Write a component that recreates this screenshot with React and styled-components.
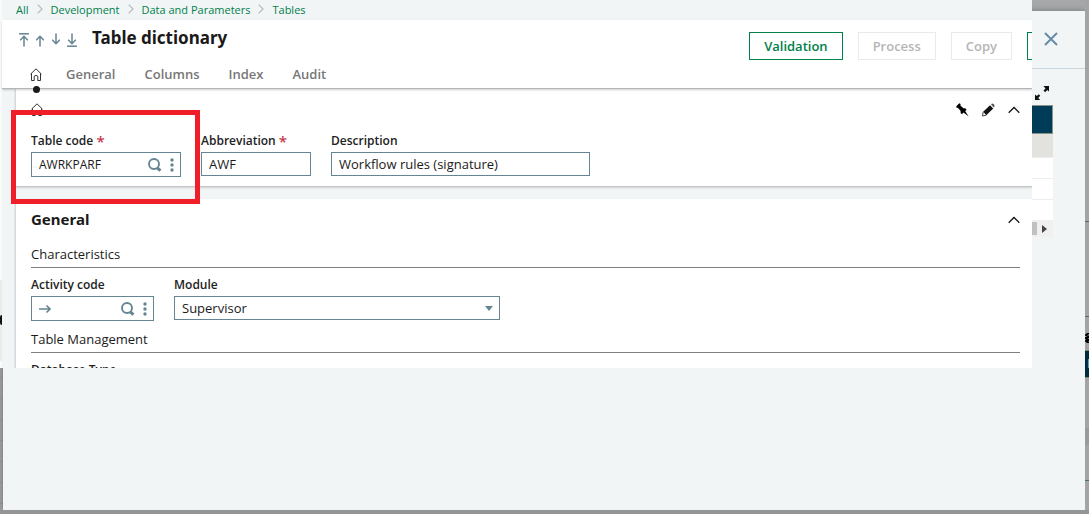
import { useState } from "react";
import styled, { createGlobalStyle } from "styled-components";

const App = () => {
  const [tableCode, setTableCode] = useState("AWRKPARF");
  const [abbreviation, setAbbreviation] = useState("AWF");
  const [description, setDescription] = useState("Workflow rules (signature)");
  const [activity, setActivity] = useState("");

  return (
    <>
      <GlobalStyle />
      <Page>
        <LeftRail />
        <Dialog>
          <DialogHeader>
            <IconButton aria-label="Close">
              <CloseIcon />
            </IconButton>
          </DialogHeader>
          <DialogBody>
            <IconButton aria-label="Expand">
              <ExpandIcon />
            </IconButton>
            <Grid>
              <GridHead />
              <GridFilter />
              <GridRow />
              <GridRow />
              <GridRow />
              <GridScroll>
                <ScrollThumb />
                <svg width="16" height="16" viewBox="0 0 16 16">
                  <path d="M5 4v8l5-4z" fill="#444" />
                </svg>
              </GridScroll>
            </Grid>
          </DialogBody>
        </Dialog>
        <RightRail>
          <RailLine $space={221} />
          <RailLine $space={94} />
          <RailMark>
            <svg width="4" height="10" viewBox="0 0 4 10">
              <path
                d="M4 0L1 2l3 2M4 4L0 5l4 2M4 7L1 8l3 2"
                fill="none"
                stroke="#000"
                strokeWidth="2"
              />
            </svg>
          </RailMark>
          <RailHead>F</RailHead>
          <RailBand />
          <RailLine $space={35} />
        </RightRail>
        <BottomRail />

        {/* table dictionary window, sits over the dialog */}
        <Window>
          <Edge>
            <EdgeTab>
              <EdgeDot />
            </EdgeTab>
          </Edge>
          <Main>
            <Breadcrumb aria-label="Breadcrumb">
              <a href="#all">All</a>
              <Crumb />
              <a href="#development">Development</a>
              <Crumb />
              <a href="#data">Data and Parameters</a>
              <Crumb />
              <a href="#tables">Tables</a>
            </Breadcrumb>

            <Header>
              <TitleRow>
                <Arrows>
                  <IconButton aria-label="First record">
                    <ArrowIcon bar />
                  </IconButton>
                  <IconButton aria-label="Previous record">
                    <ArrowIcon />
                  </IconButton>
                  <IconButton aria-label="Next record">
                    <ArrowIcon down />
                  </IconButton>
                  <IconButton aria-label="Last record">
                    <ArrowIcon down bar />
                  </IconButton>
                </Arrows>
                <Title>Table dictionary</Title>
                <Actions>
                  <ActionButton>Validation</ActionButton>
                  <ActionButton disabled>Process</ActionButton>
                  <ActionButton disabled>Copy</ActionButton>
                  <ActionButton aria-label="More actions" />
                </Actions>
              </TitleRow>
              <Tabs>
                <Tab href="#home" aria-label="Home" $active>
                  <HomeIcon />
                </Tab>
                <Tab href="#general">General</Tab>
                <Tab href="#columns">Columns</Tab>
                <Tab href="#index">Index</Tab>
                <Tab href="#audit">Audit</Tab>
              </Tabs>
            </Header>

            <Panel>
              <PanelHeader>
                <HomeIcon />
                <Tools>
                  <IconButton aria-label="Pin">
                    <PinIcon />
                  </IconButton>
                  <IconButton aria-label="Edit">
                    <PencilIcon />
                  </IconButton>
                  <IconButton aria-label="Collapse">
                    <ChevronUp />
                  </IconButton>
                </Tools>
              </PanelHeader>
              <Fields>
                <Field $width={150}>
                  <label htmlFor="code">
                    Table code <Star>*</Star>
                  </label>
                  <Control $tall>
                    <input
                      id="code"
                      value={tableCode}
                      onChange={(e) => setTableCode(e.target.value)}
                    />
                    <LookupButtons />
                  </Control>
                </Field>
                <Field $width={110}>
                  <label htmlFor="abbr">
                    Abbreviation <Star>*</Star>
                  </label>
                  <Control>
                    <input
                      id="abbr"
                      value={abbreviation}
                      onChange={(e) => setAbbreviation(e.target.value)}
                    />
                  </Control>
                </Field>
                <Field $width={259}>
                  <label htmlFor="desc">Description</label>
                  <Control>
                    <input
                      id="desc"
                      value={description}
                      onChange={(e) => setDescription(e.target.value)}
                    />
                  </Control>
                </Field>
              </Fields>
            </Panel>

            <Panel>
              <PanelHeader>
                <PanelTitle>General</PanelTitle>
                <Tools>
                  <IconButton aria-label="Collapse General">
                    <ChevronUp />
                  </IconButton>
                </Tools>
              </PanelHeader>
              <SectionTitle>Characteristics</SectionTitle>
              <Fields>
                <Field $width={123}>
                  <label htmlFor="activity">Activity code</label>
                  <Control $tall>
                    <GoIcon />
                    <input
                      id="activity"
                      value={activity}
                      onChange={(e) => setActivity(e.target.value)}
                    />
                    <LookupButtons />
                  </Control>
                </Field>
                <Field $width={326}>
                  <label htmlFor="module">Module</label>
                  <Control>
                    <select id="module" defaultValue="Supervisor">
                      <option>Supervisor</option>
                    </select>
                    <svg width="8" height="5" viewBox="0 0 8 5">
                      <path d="M0 0h8L4 5z" fill="#668592" />
                    </svg>
                  </Control>
                </Field>
              </Fields>
              <SectionTitle>Table Management</SectionTitle>
              <Fields>
                <Field $width={150}>
                  <label htmlFor="dbtype">Database Type</label>
                  <Control>
                    <input id="dbtype" />
                  </Control>
                </Field>
              </Fields>
            </Panel>
          </Main>
          <Highlight />
        </Window>
      </Page>
    </>
  );
};

export default App;

// icons

const CloseIcon = () => (
  <svg width="14" height="14" viewBox="0 0 14 14">
    <path d="M1 1l12 12M13 1L1 13" stroke="#668aa3" strokeWidth="1.9" />
  </svg>
);

const ExpandIcon = () => (
  <svg width="14" height="14" viewBox="0 0 14 14" fill="#111">
    <path d="M8.500 0H14v5.500l-1.800-1.500-2 2.200-1.700-1.600 2-2.200zM0 14V8.500L1.800 10l2-1.800 1.400 1.600-2 2.200 2 2z" />
  </svg>
);

const ArrowIcon = ({ down, bar }) => (
  <svg width="10" height="14" viewBox="0 0 10 14">
    <g
      transform={down ? "rotate(180 5 7)" : undefined}
      fill="none"
      stroke="#668592"
      strokeWidth="1.5"
    >
      {bar && <path d="M0 .8h10" />}
      <path d="M5 13.500V3.500M1.200 7.200L5 3.300l3.800 3.900" />
    </g>
  </svg>
);

const HomeIcon = () => (
  <svg width="12" height="13" viewBox="0 0 12 13">
    <path
      d="M.5 6.200L6 .8l5.500 5.400M1.500 5.500v7h2.700V8.800q0-1.300 1.800-1.300t1.800 1.300v3.700h2.700v-7"
      fill="none"
      stroke="#333"
      strokeWidth="1"
    />
  </svg>
);

const PinIcon = () => (
  <svg width="13" height="14" viewBox="0 0 13 14">
    <path
      d="M.3 3.200L3.300.3l1.300.8-.2 1.400 3 2.700 2.300.3.8 1.200-1.300 1.500L12.700 13.600 7.600 9.600 6 11l-1.200-.6-.3-2.600-2.700-3-1.100.1z"
      fill="#000"
    />
  </svg>
);

const PencilIcon = () => (
  <svg width="13" height="14" viewBox="0 0 13 14">
    <path d="M1.200 8.700L8 2.200l3.200 3.200-6.900 6.800z" fill="#111" />
    <path d="M9 1.300L10.200.5q2.300.3 2.400 2.500l-.8 1.500z" fill="#555" />
    <path d="M1.200 8.700l-.7 4.300 3.800-.8" fill="none" stroke="#444" strokeWidth="1" />
    <path d="M8.300 1.800l3 3" stroke="#ccc" strokeWidth=".8" />
  </svg>
);

const ChevronUp = () => (
  <svg width="12" height="8" viewBox="0 0 12 8">
    <path d="M.7 6.700L6 1.500l5.300 5.200" fill="none" stroke="#111" strokeWidth="1.300" />
  </svg>
);

const Crumb = () => (
  <svg width="6" height="10" viewBox="0 0 6 10">
    <path d="M.7.6L5 5 .7 9.400" fill="none" stroke="#bbb" strokeWidth="1.300" />
  </svg>
);

const GoIcon = () => (
  <svg width="12" height="10" viewBox="0 0 12 10">
    <path d="M0 5h11M7.500 1.500L11 5 7.500 8.500" fill="none" stroke="#668592" strokeWidth="1.600" />
  </svg>
);

const LookupButtons = () => (
  <>
    <IconButton aria-label="Search">
      <svg width="14" height="14" viewBox="0 0 14 14" fill="none" stroke="#668592">
        <circle cx="6" cy="6" r="5" strokeWidth="1.900" />
        <path d="M9.300 10l3.200 2.600" strokeWidth="3" />
      </svg>
    </IconButton>
    <IconButton aria-label="More options">
      <svg width="4" height="14" viewBox="0 0 4 14" fill="#668592">
        <circle cx="2" cy="2" r="1.700" />
        <circle cx="2" cy="7" r="1.700" />
        <circle cx="2" cy="12" r="1.700" />
      </svg>
    </IconButton>
  </>
);

// styled components css

const GlobalStyle = createGlobalStyle`
  * {
    box-sizing: border-box;
  }

  body {
    margin: 0;
    background: #a6a7a8;
    color: #1a1a1a;
    font-family: "Open Sans", "Noto Sans", sans-serif;
    font-size: 13px;
  }

  svg {
    display: block;
    flex: none;
  }
`;

const Page = styled.div`
  position: relative;
  display: grid;
  grid-template-columns: 3px 1fr 4px;
  grid-template-rows: 1fr 4px;
  min-height: 100vh;
  overflow: hidden;
`;

const LeftRail = styled.div`
  background: repeating-linear-gradient(#a3a3a3 0 20px, #989898 20px 21px);
`;

const Dialog = styled.section`
  margin-top: 11px;
  background: #f1f5f6;
  box-shadow: 0 0 6px rgba(0, 0, 0, 0.3);
`;

const DialogHeader = styled.header`
  display: flex;
  align-items: center;
  justify-content: flex-end;
  height: 58px;
  padding: 0 27px 2px;
  border-bottom: 1px solid #c8d5dc;
`;

const DialogBody = styled.div`
  display: flex;
  flex-direction: column;
  align-items: flex-end;
  gap: 5px;
  padding: 17px 32px;

  > button {
    margin-right: 4px;
  }
`;

const Grid = styled.div`
  width: 100%;
`;

const GridHead = styled.div`
  height: 29px;
  background: #003b57;
  border: 1px solid #8c9188;
`;

const GridFilter = styled.div`
  height: 23px;
  background: #e2e3df;
`;

const GridRow = styled.div`
  height: 21px;
  background: #fff;
  border-top: 1px solid #ebedee;
`;

const GridScroll = styled.div`
  display: flex;
  align-items: center;
  justify-content: flex-end;
  height: 17px;
  background: #f0f0f0;
`;

const ScrollThumb = styled.div`
  flex: 1;
  height: 13px;
  background: #c1c1c1;
`;

const RightRail = styled.div`
  overflow: hidden;
  background: #a3a5a5;
`;

const RailLine = styled.div`
  height: 1px;
  margin-top: ${(props) => props.$space}px;
  background: #4c6b7c;
`;

const RailMark = styled.div`
  padding: 16px 0 7px;
`;

const RailHead = styled.div`
  height: 28px;
  padding-left: 2px;
  border: solid #7f8479;
  border-width: 1px 0;
  background: #002b3e;
  color: #9ba6ab;
  font-size: 12px;
  font-weight: 700;
  line-height: 26px;
`;

const RailBand = styled.div`
  height: 17px;
  margin-top: 50px;
  background: #999b9b;
`;

const BottomRail = styled.div`
  grid-column: 1 / -1;
  background: #949696;
`;

const Window = styled.section`
  position: absolute;
  inset: 0 57px 146px 0;
  display: flex;
  overflow: hidden;
  background: #f1f5f6;
`;

const Edge = styled.div`
  width: 2px;
  overflow: hidden;
  background: #fafafa;
`;

const EdgeTab = styled.div`
  height: 81px;
  margin-top: 280px;
  padding-top: 35px;
  background: #ebebe8;
`;

const EdgeDot = styled.div`
  height: 10px;
  border-radius: 5px 0 0 5px;
  background: #111;
`;

const Main = styled.main`
  display: flex;
  flex: 1;
  flex-direction: column;
  min-width: 0;
`;

const Breadcrumb = styled.nav`
  display: flex;
  flex: none;
  align-items: center;
  gap: 8px;
  height: 20px;
  padding: 0 14px 2px;
  font-size: 11px;

  a {
    color: #00804a;
    text-decoration: none;
  }
`;

const Header = styled.header`
  position: relative;
  flex: none;
  height: 69px;
  background: #fff;
  border-bottom: 1px solid #b3b5b6;
  box-shadow: 0 1px 2px rgba(0, 0, 0, 0.2);
`;

const TitleRow = styled.div`
  display: flex;
  align-items: center;
  height: 40px;
  padding-left: 17px;
`;

const Arrows = styled.div`
  display: flex;
  gap: 6px;
  margin-right: 15px;
`;

const Title = styled.h1`
  margin: 0;
  padding-bottom: 4px;
  font-family: "Noto Sans", sans-serif;
  font-size: 17px;
  font-weight: 700;
  line-height: 24px;
`;

const Actions = styled.div`
  display: flex;
  gap: 15px;
  margin: 12px -26px 0 auto;
`;

const ActionButton = styled.button`
  height: 28px;
  min-width: 31px;
  padding: 0 14px;
  border: 1px solid #00804a;
  background: #fff;
  color: #00804a;
  font-family: inherit;
  font-size: 13px;
  font-weight: 600;

  &:disabled {
    border-color: #e8ebed;
    color: #b5b5b5;
  }
`;

const Tabs = styled.nav`
  display: flex;
  gap: 29px;
  height: 28px;
  padding-left: 28px;
`;

const Tab = styled.a`
  position: relative;
  display: flex;
  align-items: center;
  margin-right: ${(props) => (props.$active ? -5 : 0)}px;
  color: #777;
  font-weight: 600;
  text-decoration: none;

  &::after {
    content: "";
    position: absolute;
    bottom: -5px;
    left: 3px;
    display: ${(props) => (props.$active ? "block" : "none")};
    width: 7px;
    height: 7px;
    border-radius: 50%;
    background: #1a1a1a;
  }
`;

const Panel = styled.section`
  flex: none;
  margin: 0 0 12px 13px;
  padding: 0 12px 3px 15px;
  background: #fff;
  border-left: 1px solid #d5d8da;
  border-bottom: 1px solid #c3c5c6;
  box-shadow: 0 1px 2px rgba(0, 0, 0, 0.15);
`;

const PanelHeader = styled.header`
  display: flex;
  align-items: center;
  justify-content: space-between;
  height: 43px;
  padding-bottom: 2px;
`;

const PanelTitle = styled.h2`
  margin: 0;
  padding-bottom: 2px;
  font-family: "Noto Sans", sans-serif;
  font-size: 15px;
  font-weight: 700;
`;

const Tools = styled.div`
  display: flex;
  align-items: center;
  gap: 13px;
`;

const SectionTitle = styled.h3`
  margin: 0 0 8px;
  padding: 3px 0 4px;
  border-bottom: 1px solid #808080;
  font-size: 13px;
  font-weight: 400;
  line-height: 18px;
`;

const Fields = styled.div`
  display: flex;
  gap: 20px;
  padding-bottom: 6px;
`;

const Field = styled.div`
  width: ${(props) => props.$width}px;

  label {
    display: block;
    height: 20px;
    font-size: 12px;
    font-weight: 600;
    line-height: 18px;
    color: #222;
    white-space: nowrap;
  }
`;

const Star = styled.span`
  color: #c7384f;
  font-size: 15px;
  line-height: 1;
  vertical-align: -2px;
`;

const Control = styled.div`
  display: flex;
  align-items: center;
  gap: 8px;
  height: ${(props) => (props.$tall ? 25 : 24)}px;
  padding: 0 6px 0 7px;
  border: 1px solid #668592;
  background: #fff;

  input,
  select {
    flex: 1;
    width: 0;
    height: 100%;
    padding: 0 0 1px;
    border: 0;
    outline: 0;
    appearance: none;
    background: transparent;
    color: #1a1a1a;
    font-family: inherit;
    font-size: 13px;
  }

  input#code {
    font-size: 12px;
  }
`;

const IconButton = styled.button`
  display: flex;
  padding: 0;
  border: 0;
  background: none;
`;

const Highlight = styled.div`
  position: absolute;
  top: 110px;
  left: 11px;
  width: 189px;
  height: 94px;
  border: 5px solid #f01e28;
`;
